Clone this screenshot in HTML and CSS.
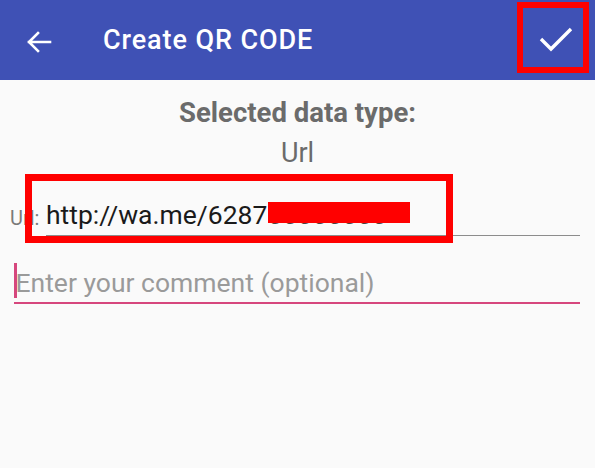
FILE: index.html
```html
<!DOCTYPE html>
<html>
<head>
<meta charset="utf-8">
<link rel="stylesheet" href="styles.css">
</head>
<body>
<header class="toolbar">
  <button class="nav-btn" aria-label="Back">
    <svg width="26" height="22" viewBox="0 0 26 22"><path d="M24 11H3M12 2L3 11l9 9" fill="none" stroke="#fff" stroke-width="2.6" stroke-linecap="square"/></svg>
  </button>
  <h1 class="title">Create QR CODE</h1>
  <div class="action">
    <svg width="36" height="28" viewBox="0 0 36 28"><path d="M3 14l10 10L33 4" fill="none" stroke="#fff" stroke-width="3.4"/></svg>
  </div>
</header>
<main class="content">
  <div class="type-label">Selected data type:</div>
  <div class="type-value">Url</div>
  <div class="url-row">
    <span class="url-label">Url:</span>
    <div class="url-field">
      <span class="url-text">http://wa.me/6287<span class="hidden-digits">55555555</span></span>
      <span class="redact"></span>
    </div>
    <span class="mark"></span>
  </div>
  <div class="comment-field">
    <span class="cursor"></span>
    <span class="placeholder">Enter your comment (optional)</span>
  </div>
</main>
</body>
</html>
```

FILE: styles.css
```css
* { box-sizing: border-box; }
html, body { margin: 0; padding: 0; }
body {
  width: 595px;
  height: 468px;
  background: #fafafa;
  font-family: Roboto, "Noto Sans", sans-serif;
  overflow: hidden;
}
.toolbar {
  height: 80px;
  background: #3f51b5;
  display: flex;
  align-items: center;
  padding-left: 26px;
  padding-right: 6px;
}
.nav-btn {
  background: none;
  border: 0;
  padding: 0;
  width: 26px;
  height: 22px;
  display: flex;
  margin-top: 3px;
}
.title {
  margin: 0 0 0 51px;
  color: #fff;
  font-size: 27px;
  font-weight: 500;
  flex: 1;
  letter-spacing: 0.9px;
}
.action {
  width: 72px;
  height: 71px;
  border: 6px solid #f00;
  display: flex;
  align-items: center;
  justify-content: center;
  margin-top: -6px;
}
.action svg { margin-left: 6px; margin-top: 4px; }
.content {
  display: flex;
  flex-direction: column;
}
.type-label {
  text-align: center;
  font-size: 27.5px;
  font-weight: 700;
  color: #6b6b6b;
  margin-top: 17px;
  line-height: 32px;
  height: 32px;
}
.type-value {
  text-align: center;
  font-size: 27px;
  color: #6b6b6b;
  margin-top: 8px;
  line-height: 32px;
  height: 32px;
}
.url-row {
  position: relative;
  display: flex;
  align-items: flex-end;
  margin-top: 5px;
  height: 69px;
  padding-right: 15px;
}
.url-label {
  font-size: 20px;
  line-height: 24px;
  color: #7a7a7a;
  margin-left: 10px;
  width: 36px;
  margin-bottom: 13px;
  white-space: nowrap;
}
.url-field {
  position: relative;
  flex: 1;
  align-self: flex-start;
  border-bottom: 1.5px solid #8c8c8c;
  height: 61.5px;
  display: flex;
  align-items: flex-end;
  padding-bottom: 5px;
}
.url-text {
  font-size: 26.5px;
  color: #1a1a1a;
  line-height: 30px;
  white-space: nowrap;
}
.hidden-digits { color: #444; }
.redact {
  position: absolute;
  left: 222px;
  top: 28px;
  width: 142px;
  height: 21px;
  background: #f00;
}
.mark {
  position: absolute;
  left: 25px;
  top: 0;
  width: 428px;
  height: 69px;
  border: 7px solid #f00;
}
.comment-field {
  margin: 15px 15px 0 14px;
  height: 45.5px;
  border-bottom: 2.5px solid #d6477d;
  display: flex;
  align-items: flex-end;
}
.cursor {
  flex: none;
  width: 2.5px;
  height: 35px;
  background: #d6477d;
  margin-bottom: 4px;
}
.placeholder {
  font-size: 26.5px;
  line-height: 30px;
  color: #9a9a9a;
  margin-left: -1px;
  margin-bottom: 4px;
  white-space: nowrap;
}
```
